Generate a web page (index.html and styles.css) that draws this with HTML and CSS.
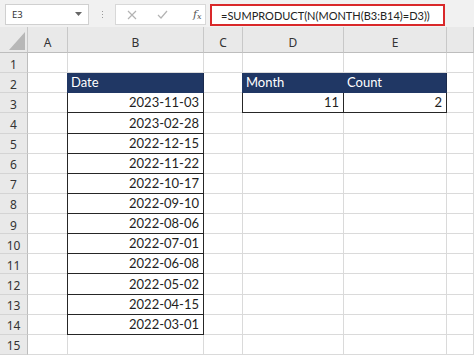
FILE: index.html
```html
<!DOCTYPE html>
<html>
<head>
<meta charset="utf-8">
<link rel="stylesheet" href="styles.css">
</head>
<body>
<div class="toolbar">
  <div class="namebox">
    <span class="nb-text">E3</span>
    <svg class="caret" width="7" height="4" viewBox="0 0 7 4"><path d="M0 0H7L3.5 4Z" fill="#666"/></svg>
  </div>
  <div class="grip"><i></i><i></i><i></i></div>
  <div class="fxbtns">
    <svg width="10" height="10" viewBox="0 0 10 10"><path d="M1 1L9 9M9 1L1 9" stroke="#b3b3b3" stroke-width="1.2" fill="none"/></svg>
    <svg width="11" height="9" viewBox="0 0 11 9"><path d="M1 5L4 8L10 1" stroke="#b3b3b3" stroke-width="1.2" fill="none"/></svg>
    <span class="fx"><i>f</i><sub>x</sub></span>
  </div>
  <div class="formula">=SUMPRODUCT(N(MONTH(B3:B14)=D3))</div>
</div>
<div class="sheet">
  <div class="corner"><svg width="16" height="18" viewBox="0 0 16 18"><path d="M16 0V18H0Z" fill="#b7b7b7"/></svg></div>
  <div class="ch">A</div><div class="ch">B</div><div class="ch">C</div><div class="ch">D</div><div class="ch">E</div><div class="ch"></div>

  <div class="rh">1</div><div class="c"></div><div class="c"></div><div class="c"></div><div class="c"></div><div class="c"></div><div class="c"></div>
  <div class="rh">2</div><div class="c"></div><div class="th">Date</div><div class="c"></div><div class="th">Month</div><div class="th">Count</div><div class="c"></div>
  <div class="rh">3</div><div class="c"></div><div class="td">2023-11-03</div><div class="c"></div><div class="td">11</div><div class="td">2</div><div class="c"></div>
  <div class="rh">4</div><div class="c"></div><div class="td">2023-02-28</div><div class="c"></div><div class="c"></div><div class="c"></div><div class="c"></div>
  <div class="rh">5</div><div class="c"></div><div class="td">2022-12-15</div><div class="c"></div><div class="c"></div><div class="c"></div><div class="c"></div>
  <div class="rh">6</div><div class="c"></div><div class="td">2022-11-22</div><div class="c"></div><div class="c"></div><div class="c"></div><div class="c"></div>
  <div class="rh">7</div><div class="c"></div><div class="td">2022-10-17</div><div class="c"></div><div class="c"></div><div class="c"></div><div class="c"></div>
  <div class="rh">8</div><div class="c"></div><div class="td">2022-09-10</div><div class="c"></div><div class="c"></div><div class="c"></div><div class="c"></div>
  <div class="rh">9</div><div class="c"></div><div class="td">2022-08-06</div><div class="c"></div><div class="c"></div><div class="c"></div><div class="c"></div>
  <div class="rh">10</div><div class="c"></div><div class="td">2022-07-01</div><div class="c"></div><div class="c"></div><div class="c"></div><div class="c"></div>
  <div class="rh">11</div><div class="c"></div><div class="td">2022-06-08</div><div class="c"></div><div class="c"></div><div class="c"></div><div class="c"></div>
  <div class="rh">12</div><div class="c"></div><div class="td">2022-05-02</div><div class="c"></div><div class="c"></div><div class="c"></div><div class="c"></div>
  <div class="rh">13</div><div class="c"></div><div class="td">2022-04-15</div><div class="c"></div><div class="c"></div><div class="c"></div><div class="c"></div>
  <div class="rh">14</div><div class="c"></div><div class="td">2022-03-01</div><div class="c"></div><div class="c"></div><div class="c"></div><div class="c"></div>
  <div class="rh">15</div><div class="c"></div><div class="c"></div><div class="c"></div><div class="c"></div><div class="c"></div><div class="c"></div>
</div>
</body>
</html>
```
FILE: styles.css
```css
* { box-sizing: border-box; }
html, body { margin: 0; padding: 0; }
body {
  width: 474px;
  height: 356px;
  overflow: hidden;
  background: #fff;
  font-family: "Noto Sans", sans-serif;
}
.toolbar {
  height: 27px;
  background: #f1f1f1;
  display: flex;
  align-items: flex-start;
  padding: 4px 0 0 5px;
}
.namebox {
  width: 84px;
  height: 21px;
  background: #fff;
  border: 1px solid #d0d0d0;
  display: flex;
  align-items: center;
  justify-content: space-between;
  padding: 0 6px 0 6px;
}
.nb-text {
  font-size: 9.5px;
  color: #333;
}
.caret { margin-top: -2px; }
.grip {
  width: 26px;
  height: 21px;
  display: flex;
  flex-direction: column;
  align-items: center;
  justify-content: center;
  gap: 2px;
}
.grip i {
  display: block;
  width: 1px;
  height: 1px;
  background: #9a9a9a;
}
.fxbtns {
  width: 91px;
  height: 21px;
  background: #fff;
  border: 1px solid #d8d8d8;
  display: flex;
  align-items: center;
  padding: 0 0 0 11px;
  gap: 20px;
}
.fx {
  font-family: "DejaVu Serif", serif;
  font-size: 11px;
  color: #555;
  margin-left: 5px;
}
.fx sub { font-size: 8px; font-style: italic; vertical-align: -1px; }
.formula {
  margin-left: 4px;
  width: 235px;
  height: 22px;
  background: #fff;
  border: 2px solid #d9282a;
  font-family: "Lato", sans-serif;
  font-size: 11px;
  color: #222;
  display: flex;
  align-items: center;
  padding-left: 9px;
}
.sheet {
  display: grid;
  grid-template-columns: 28px 40px 136px 39px 101px 103px 1fr;
  grid-template-rows: 26px repeat(15, 20.14px);
}
.corner {
  background: #e9e9e9;
  border-right: 1px solid #c8c8c8;
  border-bottom: 1px solid #bdbdbd;
  display: flex;
  align-items: flex-end;
  justify-content: flex-end;
  padding: 0 2px 2px 0;
}
.ch {
  background: #e9e9e9;
  border-right: 1px solid #c8c8c8;
  border-bottom: 1px solid #bdbdbd;
  display: flex;
  align-items: center;
  justify-content: center;
  font-size: 12px;
  color: #333;
  padding-top: 5px;
}
.rh {
  background: #e9e9e9;
  border-right: 1px solid #bdbdbd;
  border-bottom: 1px solid #d4d4d4;
  display: flex;
  align-items: center;
  justify-content: center;
  font-size: 12px;
  color: #333;
  padding-top: 3px;
}
.c {
  border-right: 1px solid #dadada;
  border-bottom: 1px solid #dadada;
}
.th {
  background: #203764;
  border-right: 1px solid #1a2a4c;
  border-bottom: 1px solid #203764;
  box-shadow: -1px 0 0 #203764;
  color: #fff;
  font-family: "Lato", sans-serif;
  font-size: 13px;
  display: flex;
  align-items: flex-end;
  padding: 0 3px 2px 3px;
}
.td {
  border-right: 1px solid #262626;
  border-bottom: 1px solid #262626;
  box-shadow: -1px 0 0 #262626;
  color: #1e1e1e;
  font-family: "Lato", sans-serif;
  font-size: 13px;
  display: flex;
  align-items: flex-end;
  justify-content: flex-end;
  padding: 0 4px 2px 3px;
}
```
